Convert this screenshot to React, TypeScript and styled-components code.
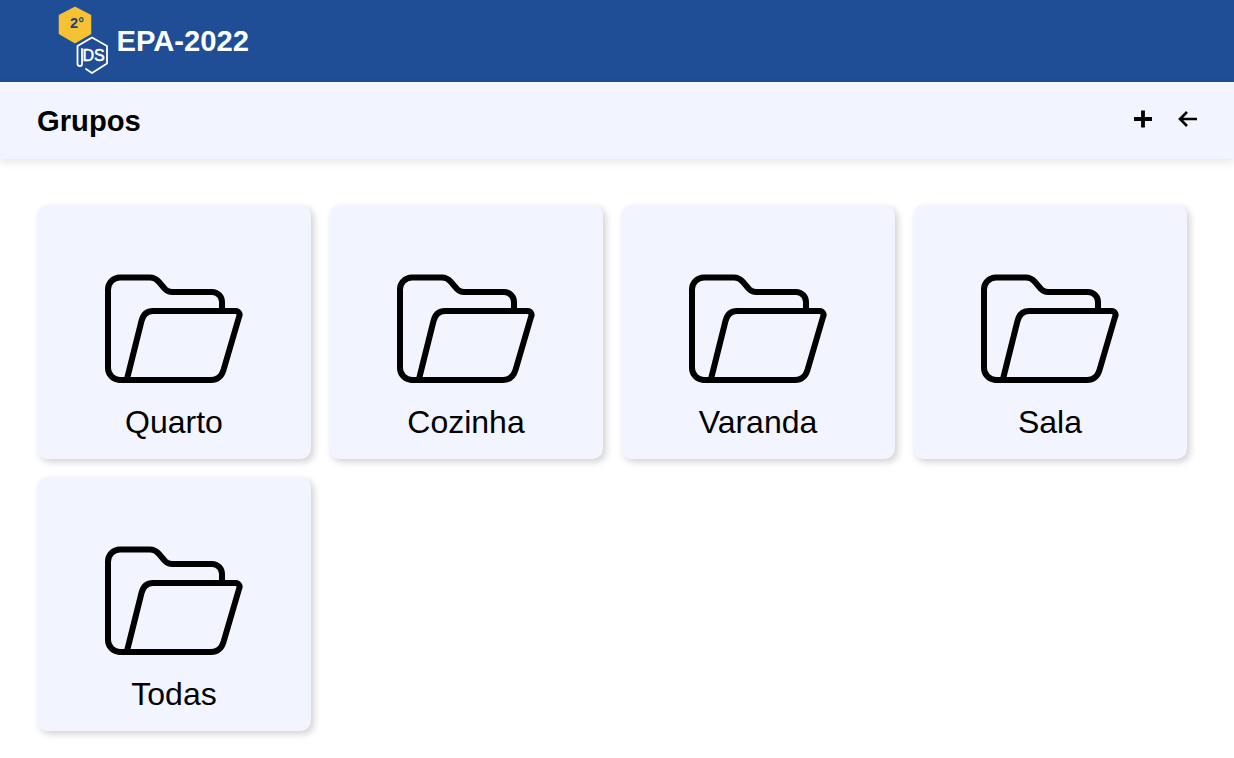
import React from "react";
import styled, { createGlobalStyle } from "styled-components";

const Global = createGlobalStyle`
  html, body { margin: 0; padding: 0; background: #fff; }
  body { font-family: "Liberation Sans", Arial, sans-serif; color: #000; }
`;

const Page = styled.div`
  width: 1234px;
  height: 758px;
  overflow: hidden;
  display: flex;
  flex-direction: column;
`;

const TopBar = styled.header`
  height: 82px;
  background: #1f4e96;
  display: flex;
  align-items: center;
  padding-left: 58px;
  flex-shrink: 0;
`;

const LogoMark = styled.svg`
  width: 52px;
  height: 68px;
  margin-top: -2px;
  margin-right: 6.5px;
  flex-shrink: 0;
`;

const Brand = styled.span`
  color: #fff;
  font-weight: 700;
  font-size: 29.2px;
  line-height: 34px;
`;

const SubBar = styled.div`
  height: 77px;
  background: #f2f4ff;
  box-shadow: 0 3px 9px rgba(0, 0, 0, 0.11);
  display: flex;
  align-items: center;
  justify-content: space-between;
  padding: 0 34px 0 37px;
  flex-shrink: 0;
  position: relative;
`;

const Title = styled.h1`
  margin: 1px 0 0;
  font-size: 29.2px;
  font-weight: 700;
`;

const Actions = styled.div`
  display: flex;
  align-items: center;
  gap: 21px;
  margin-top: -4px;
`;

const ActionIcon = styled.svg`
  width: 24px;
  height: 24px;
  display: block;
`;

const Grid = styled.main`
  display: grid;
  grid-template-columns: repeat(4, 274px);
  grid-auto-rows: 254px;
  gap: 18px;
  padding: 46px 0 0 37px;
`;

const Card = styled.div`
  background: #f2f4ff;
  border-radius: 10px;
  box-shadow: 3px 3px 7px rgba(0, 0, 0, 0.18);
  display: flex;
  flex-direction: column;
  align-items: center;
  padding-top: 65px;
  box-sizing: border-box;
`;

const FolderIcon = styled.svg`
  width: 148px;
  height: 119px;
  display: block;
`;

const Label = styled.span`
  margin-top: 14px;
  font-size: 32px;
  line-height: 38px;
`;

const Logo = () => (
  <LogoMark viewBox="0 0 52 68">
    <path d="M17 1.500 L32.500 9.500 V27.500 L17 36.500 L1.500 27.500 V9.500 Z" fill="#f6c233" stroke="#f6c233" strokeWidth="1.500" strokeLinejoin="round" />
    <text x="19" y="22" fontFamily="Liberation Sans" fontWeight="700" fontSize="14.500" fill="#1c3f7a" textAnchor="middle">2°</text>
    <path d="M28 63 L34 67 L49 57.500 V40 L34 31.500 L19.500 40 V58 Q19.500 60 22 60 Q24 60 24 58 V43" fill="none" stroke="#fff" strokeWidth="1.800" strokeLinejoin="round" strokeLinecap="round" />
    <text x="35.500" y="55" fontFamily="Liberation Sans" fontWeight="400" fontSize="16" fill="#fff" stroke="#fff" strokeWidth="0.500" textAnchor="middle">DS</text>
  </LogoMark>
);

const Folder = () => (
  <FolderIcon viewBox="10 9 148 119" fill="none" stroke="#000" strokeWidth="6" strokeLinecap="round" strokeLinejoin="round">
    <path d="M36 119 H30 A12 12 0 0 1 18 107 V29 A12 12 0 0 1 30 16.500 H60 Q65 16.500 69 21 L75 28 Q78 31 82 31 H122 A10 10 0 0 1 132 41 V50" />
    <path d="M37 118 L51.500 60 Q54 50 63 50 H145 A4 4 0 0 1 149 56 L133.500 109 Q130.500 119 121 119 H30" />
  </FolderIcon>
);

const groups = ["Quarto", "Cozinha", "Varanda", "Sala", "Todas"];

export default function App() {
  return (
    <Page>
      <Global />
      <TopBar>
        <Logo />
        <Brand>EPA-2022</Brand>
      </TopBar>
      <SubBar>
        <Title>Grupos</Title>
        <Actions>
          <ActionIcon viewBox="0 0 24 24" fill="none" stroke="#000" strokeWidth="3.8">
            <path d="M12 3.500V20.500M3 12H21" />
          </ActionIcon>
          <ActionIcon viewBox="0 0 24 24" fill="none" stroke="#000" strokeWidth="2.6">
            <path d="M21 12H4M11 5L4 12L11 19" />
          </ActionIcon>
        </Actions>
      </SubBar>
      <Grid>
        {groups.map((g) => (
          <Card key={g}>
            <Folder />
            <Label>{g}</Label>
          </Card>
        ))}
      </Grid>
    </Page>
  );
}
